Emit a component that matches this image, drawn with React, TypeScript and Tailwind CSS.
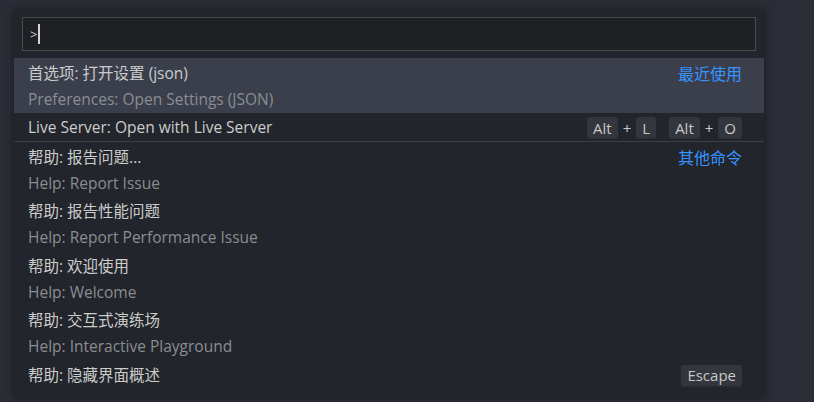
import React from "react";

const font = { fontFamily: '"Open Sans", "Noto Sans CJK SC", sans-serif' };

function Key({ children }: { children: React.ReactNode }) {
  return (
    <span className="inline-flex h-[22px] items-center rounded-[3px] bg-[#33363d] px-[6px] text-[15px] text-[#c8c8c8] shadow-[inset_0_-1px_0_#2a2c31]">
      {children}
    </span>
  );
}

function Plus() {
  return <span className="mx-[5px] text-[15px] text-[#c8c8c8]">+</span>;
}

function Item({
  label,
  detail,
  right,
  active,
}: {
  label: string;
  detail?: string;
  right?: React.ReactNode;
  active?: boolean;
}) {
  return (
    <div
      className={`flex h-[54.5px] shrink-0 flex-col pl-[14px] pr-[22px] pt-[5px] ${
        active ? "bg-[#3a3f4b]" : ""
      }`}
    >
      <div className="flex h-[22px] items-center justify-between">
        <span className="text-[15.5px] text-[#cccccc]">{label}</span>
        {right}
      </div>
      {detail && (
        <div className="mt-[4px] flex h-[22px] items-center">
          <span className="text-[15.5px] text-[#8b8d92]">{detail}</span>
        </div>
      )}
    </div>
  );
}

export default function App() {
  return (
    <div className="h-[402px] w-[814px] overflow-hidden bg-[#2a2d35]" style={font}>
      <div className="ml-[14px] mt-[10px] flex h-[387px] w-[750px] flex-col overflow-hidden bg-[#22252b] shadow-[0_0_8px_rgba(0,0,0,0.45)]">
        <div className="mx-[8px] mt-[7px] flex h-[34px] shrink-0 items-center border border-[#4b4b4b] bg-[#1f2024] px-[7px]">
          <span className="text-[13px] leading-none text-[#cccccc]">&gt;</span>
          <span className="ml-[1px] h-[20px] w-[1.5px] bg-[#d4d4d4]" />
        </div>
        <div className="mt-[7px] flex flex-col">
          <Item
            active
            label="首选项: 打开设置 (json)"
            detail="Preferences: Open Settings (JSON)"
            right={<span className="text-[16px] text-[#3794ff]">最近使用</span>}
          />
          <div className="flex h-[29px] shrink-0 items-center justify-between border-b border-[#3b3e45] pl-[14px] pr-[22px] pt-[3px]">
            <span className="text-[15.5px] text-[#cccccc]">Live Server: Open with Live Server</span>
            <div className="flex items-center">
              <Key>Alt</Key>
              <Plus />
              <Key>L</Key>
              <span className="w-[13px]" />
              <Key>Alt</Key>
              <Plus />
              <Key>O</Key>
            </div>
          </div>
          <Item
            label="帮助: 报告问题..."
            detail="Help: Report Issue"
            right={<span className="text-[16px] text-[#3794ff]">其他命令</span>}
          />
          <Item label="帮助: 报告性能问题" detail="Help: Report Performance Issue" />
          <Item label="帮助: 欢迎使用" detail="Help: Welcome" />
          <Item label="帮助: 交互式演练场" detail="Help: Interactive Playground" />
          <Item label="帮助: 隐藏界面概述" right={<Key>Escape</Key>} />
        </div>
      </div>
    </div>
  );
}
